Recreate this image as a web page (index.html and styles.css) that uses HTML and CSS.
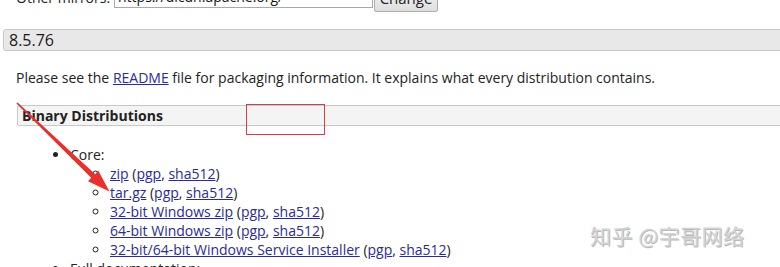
FILE: index.html
```html
<!DOCTYPE html>
<html>
<head>
<meta charset="utf-8">
<link rel="stylesheet" href="styles.css">
</head>
<body>
<div class="page">
  <form class="mirrors">
    <span class="mirrors-label">Other mirrors:</span>
    <span class="select">https://dlcdn.apache.org/<span class="caret">▼</span></span>
    <span class="btn">Change</span>
  </form>

  <h3 class="version">8.5.76</h3>

  <div class="content">
    <p class="intro">Please see the <a href="#">README</a> file for packaging information. It explains what every distribution contains.</p>

    <h4 class="sub-head">Binary Distributions</h4>

    <ul class="dist">
      <li>Core:
        <ul class="files">
          <li><a href="#">zip</a> (<a href="#">pgp</a>, <a href="#">sha512</a>)</li>
          <li><a href="#">tar.gz</a> (<a href="#">pgp</a>, <a href="#">sha512</a>)</li>
          <li><a href="#">32-bit Windows zip</a> (<a href="#">pgp</a>, <a href="#">sha512</a>)</li>
          <li><a href="#">64-bit Windows zip</a> (<a href="#">pgp</a>, <a href="#">sha512</a>)</li>
          <li><a href="#">32-bit/64-bit Windows Service Installer</a> (<a href="#">pgp</a>, <a href="#">sha512</a>)</li>
        </ul>
      </li>
      <li>Full documentation:</li>
    </ul>
  </div>

  <div class="annot-box"></div>
  <svg class="annot-arrow" width="130" height="200" viewBox="0 0 130 200">
    <polygon points="17.6,102.4 95.2,174.2 98.2,170.4 109.5,191.5 88,181.2 91.2,177.8 16.4,103.6" fill="#e8302c"/>
  </svg>
  <div class="watermark">知乎 @宇哥网络</div>
</div>
</body>
</html>
```

FILE: styles.css
```css
html, body {
  margin: 0;
  padding: 0;
  background: #fff;
  overflow: hidden;
}
body {
  font-family: "Open Sans", "Noto Sans", sans-serif;
  font-size: 14px;
  color: #222;
}
.page {
  position: relative;
  width: 780px;
  height: 267px;
  overflow: hidden;
}
.mirrors {
  display: flex;
  align-items: flex-start;
  margin: -12px 0 0 16px;
  height: 24px;
}
.mirrors-label {
  font-size: 14px;
  line-height: 20px;
  margin-top: 0;
  color: #222;
  width: 98px;
  white-space: nowrap;
  flex: none;
}
.select {
  position: relative;
  width: 254px;
  height: 18px;
  border: 1px solid #a9a9a9;
  background: #fff;
  font-size: 14px;
  line-height: 16px;
  padding-left: 3px;
  box-sizing: content-box;
  color: #111;
  white-space: nowrap;
  flex: none;
}
.caret {
  position: absolute;
  right: 6px;
  top: 4px;
  font-size: 7px;
  line-height: 8px;
  color: #333;
}
.btn {
  margin-left: 1px;
  width: 62px;
  height: 22px;
  border: 1px solid #adadad;
  border-radius: 2px;
  background: linear-gradient(#f4f4f4, #dedede);
  font-size: 15px;
  line-height: 18px;
  text-align: center;
  color: #222;
  flex: none;
}
.version {
  margin: 17px -10px 0 3px;
  height: 20px;
  border: 1px solid #c8c8c8;
  border-radius: 3px;
  background: #e8e8e8;
  padding-left: 5px;
  font-size: 16px;
  font-weight: 500;
  line-height: 20px;
  color: #1a1a1a;
}
.content {
  padding-left: 16px;
}
.intro {
  margin: 17px 0 0;
  line-height: 19px;
  color: #222;
}
a {
  color: #2a2a9c;
  text-decoration: underline;
}
.sub-head {
  margin: 18px -10px 0 1px;
  height: 19px;
  border: 1px solid #c8c8c8;
  border-radius: 2px;
  background: #f4f4f4;
  padding-left: 4px;
  font-size: 14px;
  font-weight: 700;
  line-height: 19px;
  color: #222;
}
.dist {
  margin: 19px 0 0;
  padding-left: 54px;
  line-height: 19px;
}
.files {
  list-style-type: circle;
  margin: 0;
  padding-left: 40px;
}
.annot-box {
  position: absolute;
  left: 246px;
  top: 104px;
  width: 77px;
  height: 29px;
  border: 1px solid #d0404a;
}
.annot-arrow {
  position: absolute;
  left: 0;
  top: 0;
}
.watermark {
  position: absolute;
  left: 590px;
  top: 222px;
  font-family: "Noto Sans CJK SC", sans-serif;
  font-size: 21px;
  line-height: 26px;
  color: #d4d4d4;
  text-shadow: 1px 1px 0 #b8b8b8;
  letter-spacing: 0.5px;
}
```
